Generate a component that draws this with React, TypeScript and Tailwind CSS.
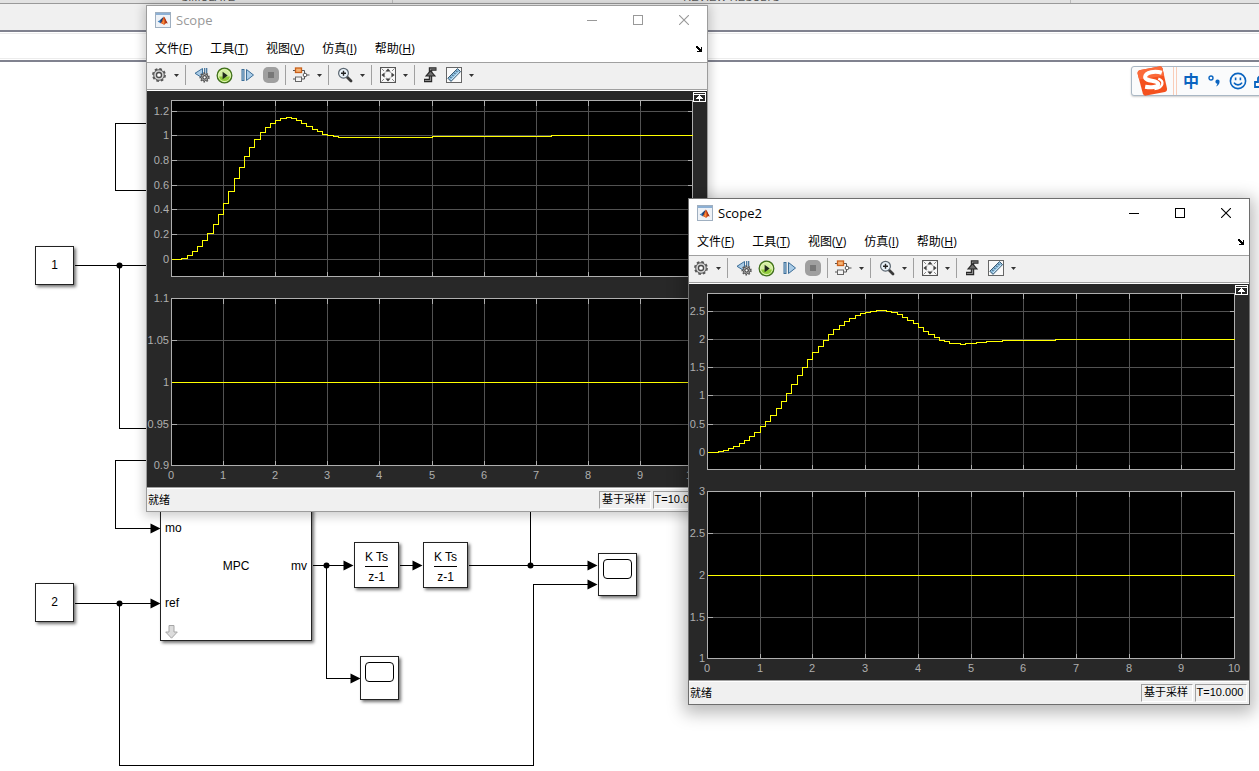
import React from "react";

/* ------------------------------------------------------------------ */
/* Icons                                                               */
/* ------------------------------------------------------------------ */

function MatlabIcon() {
  return (
    <svg width="16" height="16" viewBox="0 0 16 16" aria-hidden="true">
      <rect x="0.5" y="0.5" width="15" height="15" fill="#eef2f7" stroke="#9fafc0" />
      <rect x="1" y="1" width="14" height="2" fill="#8db0d4" />
      <path d="M2.6 9.4 L5.2 8 L7.6 5.8 L8.6 5 L7.4 9.6 L5.6 11.2 Z" fill="#3f7fbe" />
      <path d="M5.2 8 L8.6 5 L7 10 L5.6 11.2 Z" fill="#1d3f6e" />
      <path d="M8.8 4.4 C9.8 5 11 9 13 11.6 C11.4 11 10.4 11.2 9.2 13 C8.2 12.6 7.4 11.2 5.6 11.2 C7.4 9.6 7.8 5.8 8.8 4.4 Z" fill="#d9541e" />
      <path d="M8.8 4.4 C9.8 5 11 9 13 11.6 C11.8 11 11.2 11 10.6 11.4 C10.4 8.6 9.6 6.4 8.8 4.4 Z" fill="#a12d14" />
      <path d="M8.8 6.4 C9.3 8.2 9.3 10.4 8.8 12.2 C8.2 11.4 7.8 11 7 10.6 C8 9.6 8.4 8.2 8.8 6.4 Z" fill="#f5913c" />
    </svg>
  );
}

function GearShape({ cx, cy, r }: { cx: number; cy: number; r: number }) {
  return (
    <g>
      <circle cx={cx} cy={cy} r={r} fill="none" stroke="#555" strokeWidth="1.8" strokeDasharray={r > 5 ? "2.6 2.05" : "1.6 1.4"} />
      <circle cx={cx} cy={cy} r={r - 0.7} fill="#d0d0d0" stroke="#5a5a5a" strokeWidth="1" />
      <circle cx={cx} cy={cy} r={r * 0.42} fill="#fff" stroke="#4a4a4a" strokeWidth="1.3" />
    </g>
  );
}

function GearIcon() {
  return (
    <svg width="16" height="16" viewBox="0 0 16 16" aria-hidden="true">
      <GearShape cx={8} cy={8} r={6} />
    </svg>
  );
}

function StepBackOptionsIcon() {
  return (
    <svg width="16" height="16" viewBox="0 0 16 16" aria-hidden="true">
      <path d="M8.5 1.5 V11 L1 6.3 Z" fill="#a9cbe6" stroke="#3c6e98" />
      <path d="M10.7 1 V7 M12.7 1 V6" stroke="#3c6e98" strokeWidth="1.2" />
      <GearShape cx={10.6} cy={10.4} r={4.2} />
    </svg>
  );
}

function RunIcon() {
  return (
    <svg width="17" height="17" viewBox="0 0 18 18" aria-hidden="true">
      <circle cx="9" cy="9" r="7.8" fill="#9fd34d" stroke="#3f6d1d" strokeWidth="1.3" />
      <circle cx="9" cy="9" r="6.3" fill="#d3efa0" stroke="#e9f8c8" strokeWidth="1" />
      <path d="M3.2 10 A5.9 5.9 0 0 0 14.8 10 Z" fill="#8fca3a" />
      <path d="M7 5 L12.4 9 L7 13 Z" fill="#1f2a1a" />
    </svg>
  );
}

function StepForwardIcon() {
  return (
    <svg width="16" height="16" viewBox="0 0 16 16" aria-hidden="true">
      <rect x="2" y="2.5" width="2" height="11" fill="#a9cbe6" stroke="#3c6e98" />
      <path d="M6.5 2.5 L13.5 8 L6.5 13.5 Z" fill="#a9cbe6" stroke="#3c6e98" />
    </svg>
  );
}

function StopIcon() {
  return (
    <svg width="16" height="16" viewBox="0 0 16 16" aria-hidden="true">
      <rect x="0" y="0" width="16" height="16" rx="5" fill="#9f9f9f" />
      <rect x="5" y="5" width="6" height="6" fill="#777" />
    </svg>
  );
}

function HighlightBlockIcon() {
  return (
    <svg width="17" height="16" viewBox="0 0 17 16" aria-hidden="true">
      <path d="M8 3.5 H11.5 V7 M8 12 H11.5 V9" fill="none" stroke="#555" strokeWidth="1" />
      <path d="M0 3.5 H2 M0 12 H2" stroke="#555" />
      <rect x="2.5" y="1" width="6" height="4.5" fill="#f6b273" stroke="#c9601a" strokeWidth="1.3" />
      <rect x="2.5" y="10" width="6" height="4.5" fill="#f4f4f4" stroke="#666" />
      <circle cx="12" cy="8" r="1.8" fill="#fff" stroke="#555" />
      <path d="M14 8 H16.5" stroke="#555" />
    </svg>
  );
}

function ZoomInIcon() {
  return (
    <svg width="16" height="16" viewBox="0 0 16 16" aria-hidden="true">
      <path d="M10 10 L14 14" stroke="#3a3a3a" strokeWidth="2.8" strokeLinecap="round" />
      <circle cx="6.5" cy="6.2" r="4.9" fill="#eaf3fa" stroke="#5b6670" strokeWidth="1.2" />
      <path d="M4 6.2 H9 M6.5 3.7 V8.7" stroke="#222" strokeWidth="1.4" />
    </svg>
  );
}

function FitToViewIcon() {
  return (
    <svg width="16" height="16" viewBox="0 0 16 16" aria-hidden="true">
      <rect x="0.5" y="0.5" width="15" height="15" fill="#f7f7f7" stroke="#555" />
      <path d="M8 1.4 L10.6 4.6 H5.4 Z M8 14.6 L10.6 11.4 H5.4 Z M1.4 8 L4.6 5.4 V10.6 Z M14.6 8 L11.4 5.4 V10.6 Z" fill="#3f3f3f" />
      <circle cx="8" cy="8" r="3.6" fill="none" stroke="#888" strokeDasharray="1.5 1.5" />
      <path d="M1.5 1.5 L4 4 M14.5 1.5 L12 4 M1.5 14.5 L4 12 M14.5 14.5 L12 12" stroke="#888" />
    </svg>
  );
}

function TriggerIcon() {
  return (
    <svg width="16" height="16" viewBox="0 0 16 16" aria-hidden="true">
      <path d="M1 13.5 H7.5 V2 H13.5" fill="none" stroke="#262626" strokeWidth="3.4" />
      <path d="M1.8 13.5 H7.5 V2 H12.7" fill="none" stroke="#8a8a8a" strokeWidth="1.2" />
      <path d="M7.5 3.8 L12 9 H3 Z" fill="#6d6d6d" stroke="#262626" strokeWidth="1.1" />
    </svg>
  );
}

function RulerIcon() {
  return (
    <svg width="16" height="16" viewBox="0 0 16 16" aria-hidden="true">
      <rect x="0.5" y="0.5" width="15" height="15" fill="#fafafa" stroke="#666" />
      <path d="M11.5 1.6 L14.6 4.6 L5 14.4 L1.8 11.2 Z" fill="#8fbfdf" stroke="#35566f" />
      <path d="M10 3.6 L11.4 5 M8 5.6 L9.4 7 M6 7.6 L7.4 9 M4 9.6 L5.4 11" stroke="#35566f" />
      <path d="M13 5.2 L5 13" stroke="#d6ebf7" />
    </svg>
  );
}

/* ------------------------------------------------------------------ */
/* Scope window                                                        */
/* ------------------------------------------------------------------ */

const MENUS = [
  { text: "文件", key: "F" },
  { text: "工具", key: "T" },
  { text: "视图", key: "V" },
  { text: "仿真", key: "I" },
  { text: "帮助", key: "H" },
];

function ToolButton({ label, children }: { label: string; children: React.ReactNode }) {
  return (
    <button type="button" aria-label={label} className="flex h-5 w-[23px] items-center justify-center">
      {children}
    </button>
  );
}

function MoreButton({ label }: { label: string }) {
  return (
    <button type="button" aria-label={label} className="flex h-5 w-3 items-center justify-center">
      <svg width="5" height="3" viewBox="0 0 5 3" aria-hidden="true">
        <path d="M0 0 H5 L2.5 3 Z" fill="#333" />
      </svg>
    </button>
  );
}

function Separator() {
  return <span className="mr-1 ml-[3px] h-5 w-px bg-[#a0a0a0]" />;
}

function Toolbar() {
  return (
    <div className="flex h-[27px] items-center border-b border-[#a0a0a0] bg-[#f0f0f0] pb-[2px]">
      <ToolButton label="配置属性"><GearIcon /></ToolButton>
      <MoreButton label="配置选项" />
      <Separator />
      <ToolButton label="步进选项"><StepBackOptionsIcon /></ToolButton>
      <ToolButton label="运行"><RunIcon /></ToolButton>
      <ToolButton label="步进"><StepForwardIcon /></ToolButton>
      <ToolButton label="停止"><StopIcon /></ToolButton>
      <Separator />
      <ToolButton label="高亮模块"><HighlightBlockIcon /></ToolButton>
      <MoreButton label="高亮选项" />
      <Separator />
      <ToolButton label="放大"><ZoomInIcon /></ToolButton>
      <MoreButton label="缩放选项" />
      <Separator />
      <ToolButton label="适应视图"><FitToViewIcon /></ToolButton>
      <MoreButton label="视图选项" />
      <Separator />
      <ToolButton label="触发器"><TriggerIcon /></ToolButton>
      <ToolButton label="测量"><RulerIcon /></ToolButton>
      <MoreButton label="测量选项" />
    </div>
  );
}

type Tick = { label: string; y: number };

type PlotProps = {
  left: number;
  top: number;
  height: number;
  ticks: Tick[];
  levels: number[];
};

const PLOT_RIGHT = 545;

/* Expands sample levels into a staircase path over ten seconds. */
function stairs(left: number, top: number, levels: number[]) {
  const step = (PLOT_RIGHT - left) / 100;
  let d = `M${left} ${top + levels[0]}`;
  levels.forEach((level, i) => {
    d += ` H${Math.round(left + i * step)} V${top + level}`;
  });
  return `${d} H${PLOT_RIGHT}`;
}

function Plot({ left, top, height, ticks, levels }: PlotProps) {
  const bottom = top + height;
  const unit = (PLOT_RIGHT - left) / 10;
  const columns = Array.from({ length: 9 }, (_, i) => Math.round(left + unit * (i + 1)));
  const inner = ticks.filter((t) => t.y > 0 && t.y < height);
  return (
    <g>
      <g shapeRendering="crispEdges" transform="translate(0.5 0.5)" fill="none" strokeWidth="1">
        <rect x={left} y={top} width={PLOT_RIGHT - left} height={height} fill="#000" />
        {columns.map((x) => (
          <path key={x} d={`M${x} ${top} V${bottom}`} stroke="#525252" />
        ))}
        {inner.map((t) => (
          <path key={t.label} d={`M${left} ${top + t.y} H${PLOT_RIGHT}`} stroke="#525252" />
        ))}
        <rect x={left} y={top} width={PLOT_RIGHT - left} height={height} stroke="#afafaf" />
        {columns.map((x) => (
          <path key={x} d={`M${x} ${top} v5 M${x} ${bottom} v-5`} stroke="#afafaf" />
        ))}
        {inner.map((t) => (
          <path key={t.label} d={`M${left} ${top + t.y} h5 M${PLOT_RIGHT} ${top + t.y} h-5`} stroke="#afafaf" />
        ))}
        <path d={stairs(left, top, levels)} stroke="#ffff00" />
      </g>
      <g fill="#afafaf" fontSize="11" textAnchor="end">
        {ticks.map((t) => (
          <text key={t.label} x={left - 2} y={top + t.y + 4}>{t.label}</text>
        ))}
      </g>
    </g>
  );
}

type Trace = { left: number; upper: Tick[]; lower: Tick[]; levels: number[] };

function ScopeDisplay({ left, upper, lower, levels }: Trace) {
  const unit = (PLOT_RIGHT - left) / 10;
  return (
    <svg width="560" height="396" viewBox="0 0 560 396" className="block bg-[#282828] font-['Liberation_Sans',sans-serif]">
      <Plot left={left} top={9} height={176} ticks={upper} levels={levels} />
      <Plot left={left} top={207} height={167} ticks={lower} levels={[84]} />
      <g fill="#afafaf" fontSize="11" textAnchor="middle">
        {Array.from({ length: 11 }, (_, i) => (
          <text key={i} x={Math.round(left + unit * i)} y={388}>{i}</text>
        ))}
      </g>
      <g shapeRendering="crispEdges">
        <rect x="546" y="1" width="13" height="10" fill="#fff" />
        <rect x="547" y="2" width="11" height="1" fill="#282828" />
        <rect x="547" y="4" width="11" height="6" fill="#282828" />
        <path d="M552 4 h1 v1 h1 v1 h1 v1 h1 v1 h-3 v2 h-1 v-2 h-3 v-1 h1 v-1 h1 v-1 h1 Z" fill="#fff" />
      </g>
    </svg>
  );
}

function WindowButtons() {
  return (
    <div className="ml-auto flex h-full">
      <button type="button" aria-label="最小化" className="flex w-[46px] items-center justify-center">
        <svg width="10" height="10" viewBox="0 0 10 10" aria-hidden="true"><path d="M0 5.5 H10" stroke="currentColor" /></svg>
      </button>
      <button type="button" aria-label="最大化" className="flex w-[46px] items-center justify-center">
        <svg width="10" height="10" viewBox="0 0 10 10" aria-hidden="true"><rect x="0.5" y="0.5" width="9" height="9" fill="none" stroke="currentColor" /></svg>
      </button>
      <button type="button" aria-label="关闭" className="flex w-[46px] items-center justify-center">
        <svg width="10" height="10" viewBox="0 0 10 10" aria-hidden="true"><path d="M0 0 L10 10 M10 0 L0 10" stroke="currentColor" strokeWidth="1.1" /></svg>
      </button>
    </div>
  );
}

function ScopeWindow({ title, active, place, trace }: { title: string; active: boolean; place: string; trace: Trace }) {
  return (
    <section
      className={`absolute w-[562px] border bg-white text-black ${place} ${
        active
          ? "border-[#6e6e6e] shadow-[0_4px_16px_4px_rgba(0,0,0,0.28)]"
          : "border-[#9c9c9c] shadow-[0_2px_10px_2px_rgba(0,0,0,0.2)]"
      }`}
    >
      <header className={`flex h-[29px] items-center pb-px pl-2 ${active ? "text-black" : "text-[#999999]"}`}>
        <MatlabIcon />
        <h2 className="ml-[5px] text-[13px] leading-4">{title}</h2>
        <WindowButtons />
      </header>
      <nav className="flex h-7 items-center gap-[18px] border-b border-[#a0a0a0] pr-1 pl-2 text-xs">
        {MENUS.map((m) => (
          <button type="button" key={m.key} className="leading-4">
            {m.text}(<span className="underline">{m.key}</span>)
          </button>
        ))}
        <button type="button" aria-label="停靠" className="ml-auto">
          <svg width="8" height="6" viewBox="0 0 8 6" shapeRendering="crispEdges" aria-hidden="true">
            <path d="M0 1 h1 v-1 h2 v1 h1 v1 h1 v1 h1 v-2 h1 v5 h-5 v-1 h2 v-1 h-1 v-1 h-1 v-1 h-1 v-1 h-1 v1 h-1 Z" fill="#000" />
          </svg>
        </button>
      </nav>
      <Toolbar />
      <div className="h-px bg-white" />
      <ScopeDisplay {...trace} />
      <footer className="flex h-6 items-center border-t border-[#a0a0a0] bg-[#f0f0f0] text-[11px] shadow-[inset_0_1px_0_#fff]">
        <span className="pl-px leading-4">就绪</span>
        <span className="mr-[2px] ml-auto flex h-[18px] w-[52px] items-center justify-center border border-t-[#a0a0a0] border-r-white border-b-white border-l-[#a0a0a0] pr-0.5">基于采样</span>
        <span className="mr-[2px] flex h-[18px] w-[52px] items-center justify-center border border-t-[#a0a0a0] border-r-white border-b-white border-l-[#a0a0a0] pr-0.5 font-['Liberation_Sans',sans-serif]">T=10.000</span>
      </footer>
    </section>
  );
}

/* ------------------------------------------------------------------ */
/* Traces                                                              */
/* ------------------------------------------------------------------ */

const hold = (level: number, count: number) => Array.from({ length: count }, () => level);

const SCOPE_1: Trace = {
  left: 24,
  upper: [
    { label: "1.2", y: 11 },
    { label: "1", y: 35 },
    { label: "0.8", y: 60 },
    { label: "0.6", y: 85 },
    { label: "0.4", y: 109 },
    { label: "0.2", y: 134 },
    { label: "0", y: 159 },
  ],
  lower: [
    { label: "1.1", y: 0 },
    { label: "1.05", y: 42 },
    { label: "1", y: 84 },
    { label: "0.95", y: 126 },
    { label: "0.9", y: 167 },
  ],
  levels: [
    159, 159, 158, 155, 151, 146, 140, 133, 124, 114, 103, 91, 78, 67, 56, 47, 39, 32, 27, 23,
    20, 18, 17, 18, 20, 23, 26, 29, 31, 34, 35, 36, ...hold(37, 18), ...hold(36, 23), ...hold(35, 27),
  ],
};

const SCOPE_2: Trace = {
  left: 18,
  upper: [
    { label: "2.5", y: 18 },
    { label: "2", y: 46 },
    { label: "1.5", y: 74 },
    { label: "1", y: 102 },
    { label: "0.5", y: 131 },
    { label: "0", y: 159 },
  ],
  lower: [
    { label: "3", y: 0 },
    { label: "2.5", y: 42 },
    { label: "2", y: 84 },
    { label: "1.5", y: 126 },
    { label: "1", y: 167 },
  ],
  levels: [
    159, 159, 158, 157, 155, 153, 150, 147, 143, 139, 133, 128, 122, 115, 108, 100, 91, 82, 74, 66,
    59, 53, 47, 41, 36, 32, 28, 25, 22, 20, 19, 18, 17, 17, 18, 19, 21, 24, 27, 30,
    34, 38, 41, 44, 47, 48, 50, 50, 51, 50, 50, 49, 49, 48, 48, 48, ...hold(47, 10), ...hold(46, 34),
  ],
};

/* ------------------------------------------------------------------ */
/* Block diagram                                                       */
/* ------------------------------------------------------------------ */

const WIRES = [
  "M160 123 H115 V190 H160",
  "M74 265 H160 M119 265 V428 H160",
  "M160 460 H115 V528 H152",
  "M74 603 H152 M119 603 V765 H533 V584 H590",
  "M312 565 H346 M326 565 V678 H352",
  "M399 565 H415 M468 565 H590 M530 565 V300",
];
const ARROWS = [[160, 528], [160, 603], [353, 565], [422, 565], [360, 678], [597, 565], [597, 584]];
const JUNCTIONS = [[119, 265], [119, 603], [326, 565], [530, 565]];

const BLOCK = "absolute border border-[#222] bg-white shadow-[2px_2px_3px_rgba(0,0,0,0.55)]";

function ConstantBlock({ place, value }: { place: string; value: number }) {
  return <div className={`${BLOCK} flex h-[39px] w-[39px] items-center justify-center pb-0.5 ${place}`}>{value}</div>;
}

function ScopeBlock({ place }: { place: string }) {
  return (
    <div className={`${BLOCK} w-[39px] px-[4px] pt-[5px] ${place}`}>
      <div className="h-5 rounded-[4px] border border-black" />
    </div>
  );
}

function IntegratorBlock({ place }: { place: string }) {
  return (
    <div className={`${BLOCK} flex h-[46px] w-[45px] flex-col items-center justify-center pt-1.5 ${place}`}>
      <span className="leading-[17px]">K Ts</span>
      <span className="h-px w-[23px] bg-black" />
      <span className="leading-5">z-1</span>
    </div>
  );
}

function Diagram() {
  return (
    <div className="absolute inset-0 font-['Liberation_Sans',sans-serif] text-xs text-black">
      <svg className="absolute top-0 left-0" width="700" height="771" viewBox="0 0 700 771" aria-hidden="true">
        <g transform="translate(0.5 0.5)">
          <g fill="none" stroke="#000" shapeRendering="crispEdges">
            {WIRES.map((d) => <path key={d} d={d} />)}
          </g>
          {ARROWS.map(([x, y]) => <path key={`${x}-${y}`} d={`M${x} ${y} l-10 -5 v10 Z`} />)}
          {JUNCTIONS.map(([x, y]) => <circle key={`${x}-${y}`} cx={x} cy={y} r="3" />)}
        </g>
      </svg>
      <ConstantBlock place="top-[246px] left-[35px]" value={1} />
      <ConstantBlock place="top-[583px] left-[35px]" value={2} />
      <div className={`${BLOCK} top-[488px] left-[160px] grid h-[153px] w-[152px] grid-cols-3 grid-rows-[38px_37px_38px_19px] items-center px-1 pt-5`}>
        <span className="col-span-3">mo</span>
        <span className="col-start-2 text-center">MPC</span>
        <span className="text-right">mv</span>
        <span className="col-span-3">ref</span>
        <svg width="13" height="14" viewBox="0 0 13 14" aria-hidden="true">
          <path d="M4 0.5 H9 V7 H12.3 L6.5 13.2 L0.7 7 H4 Z" fill="#dcdcdc" stroke="#a6a6a6" />
        </svg>
      </div>
      <IntegratorBlock place="top-[542px] left-[354px]" />
      <IntegratorBlock place="top-[542px] left-[423px]" />
      <ScopeBlock place="top-[553px] left-[598px] h-[43px]" />
      <ScopeBlock place="top-[656px] left-[360px] h-[44px]" />
    </div>
  );
}

/* ------------------------------------------------------------------ */
/* Input method bar and page frame                                     */
/* ------------------------------------------------------------------ */

function InputMethodBar() {
  return (
    <div className="absolute top-[66px] -right-6 flex h-[30px] w-[152px] items-center rounded-[3px] border border-[#a9b7c4] bg-[#fafbfc] pl-[5px] text-[#0a64c0] shadow-[0_1px_2px_rgba(0,0,0,0.2)]">
      <svg width="31" height="30" viewBox="0 0 32 31" className="shrink-0" aria-hidden="true">
        <path d="M3.5 4.2 L23 0.4 Q25.6 0 26.3 2.4 L31 23.2 Q31.4 26 28.8 26.8 L9.6 30.6 Q6.8 31 6 28.4 L0.6 8 Q0.2 5 3.5 4.2 Z" fill="#f4511e" />
        <path d="M3.5 4.2 L23 0.4 Q25.6 0 26.3 2.4 L28 10 L2.2 14 L0.6 8 Q0.2 5 3.5 4.2 Z" fill="#fb6a3a" />
        <path d="M25.6 7 C19 4.8 8.6 6 8.4 11.4 C8.4 16.4 21.6 14 22 18.6 C22 22 14 22.4 8.4 21.4" fill="none" stroke="#fff" strokeWidth="4.2" />
        <path d="M22 13 C28 15 28.4 22.4 18 24" fill="none" stroke="#fff" strokeWidth="2.4" />
      </svg>
      <span className="ml-[5px] h-full w-1 shrink-0 border-x border-[#f9cdb9]" />
      <button type="button" aria-label="中英文切换" className="ml-1.5 shrink-0 pb-0.5 font-['Noto_Sans_CJK_SC',sans-serif] text-base leading-4 font-bold">中</button>
      <svg width="13" height="12" viewBox="0 0 13 12" className="ml-[9px] shrink-0" aria-hidden="true">
        <circle cx="3" cy="3" r="2" fill="none" stroke="currentColor" strokeWidth="1.4" />
        <path d="M7.4 6.4 A2 2 0 1 1 11.6 6.6 C11.6 9 10.2 10.8 8 11.4 C9 10.2 9.4 9.4 9.2 8.6 C8 8.4 7.4 7.6 7.4 6.4 Z" fill="currentColor" />
      </svg>
      <svg width="18" height="18" viewBox="0 0 18 18" className="ml-2 shrink-0" fill="none" stroke="currentColor" strokeWidth="1.6" aria-hidden="true">
        <circle cx="9" cy="9" r="7.6" />
        <path d="M6.6 5.6 V8.2 M11.4 5.6 V8.2" />
        <path d="M5 10.6 C6.6 13.6 11.4 13.6 13 10.6" />
      </svg>
      <svg width="14" height="14" viewBox="0 0 14 14" className="ml-[7px] shrink-0" fill="none" stroke="currentColor" strokeWidth="1.8" aria-hidden="true">
        <path d="M1 13 V8 H4 V4 Q7 0 10 4 V8 H13 V13 Z" />
      </svg>
    </div>
  );
}

export default function App() {
  return (
    <main className="relative h-screen w-full overflow-hidden bg-white font-['Open_Sans','Noto_Sans_CJK_SC',sans-serif]">
      <div className="flex h-1 items-end overflow-hidden border-b border-[#999] bg-[#e2e2e2] font-['Liberation_Sans',sans-serif] text-[11px] leading-[11px] text-[#555]">
        <span className="w-[393px] border-r border-[#bbb] pl-6 text-center">SIMULATE</span>
        <span className="w-[678px] border-r border-[#bbb] text-center">REVIEW RESULTS</span>
      </div>
      <div className="h-7 border-b-2 border-[#80828f] bg-[#f0f0f0]" />
      <div className="flex h-[30px] flex-col border-b-2 border-[#80828f] py-px">
        <div className="h-full border-y border-[#ececec]" />
      </div>
      <Diagram />
      <InputMethodBar />
      <ScopeWindow title="Scope" active={false} place="top-[5px] left-[146px]" trace={SCOPE_1} />
      <ScopeWindow title="Scope2" active place="top-[198px] left-[688px]" trace={SCOPE_2} />
    </main>
  );
}
